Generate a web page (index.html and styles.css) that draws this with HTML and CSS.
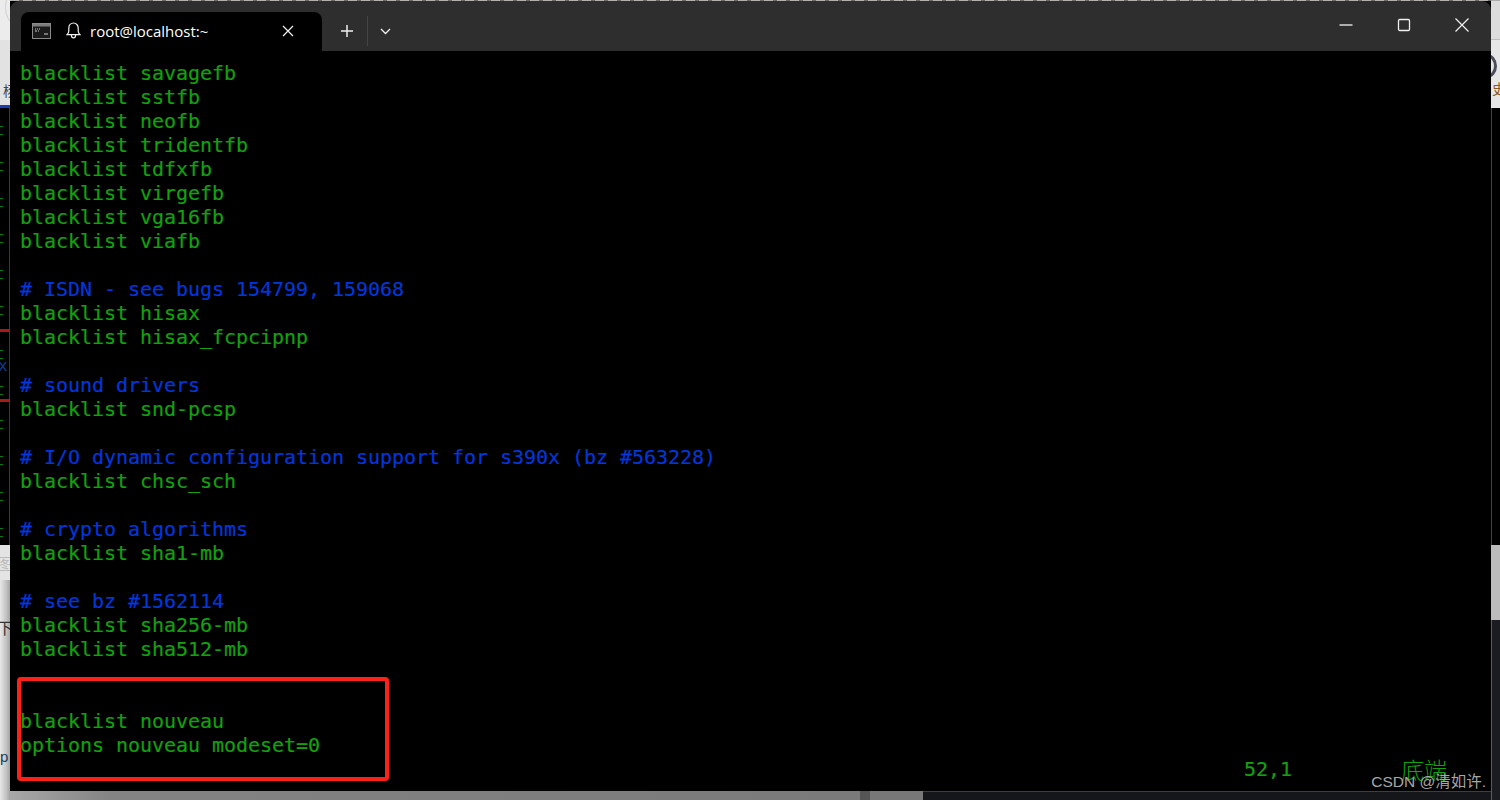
FILE: index.html
```html
<!DOCTYPE html>
<html lang="zh">
<head>
<meta charset="utf-8">
<title>root@localhost:~</title>
<link rel="stylesheet" href="styles.css">
</head>
<body>
<div class="desk">
  <div class="side side-left">
    <div class="bg-top"><span class="arc arc-left"></span></div>
    <div class="bg-bar"><span class="peek">杨</span></div>
    <div class="bg-blue"></div>
    <div class="code-strip code-a"></div>
    <div class="red-tick"></div>
    <div class="code-strip code-b"><span class="peek-x">x</span></div>
    <div class="red-tick"></div>
    <div class="code-strip code-c"></div>
    <div class="bg-panel"><span class="peek-faint">图</span></div>
    <div class="bg-page">
      <span class="peek-down">下</span>
      <span class="peek-p">p</span>
    </div>
  </div>
  <div class="center">
    <div class="top-strip"></div>
    <div class="center-fill"></div>
    <div class="bottom-strip">
      <div class="strip-gray"></div>
      <div class="strip-thumb"></div>
      <div class="strip-gray-short"></div>
      <div class="strip-dark"></div>
    </div>
  </div>
  <div class="side side-right">
    <div class="bg-top-r"></div>
    <div class="bg-bar-r"><span class="arc arc-right"></span><span class="peek-r">史</span></div>
    <div class="dark-r"></div>
    <div class="light-r"></div>
    <div class="dark-r-end"></div>
  </div>

  <section class="window">
    <header class="titlebar">
      <div class="tab">
        <svg class="ic-term" width="19" height="16" viewBox="0 0 19 16">
          <rect x="0.5" y="0.5" width="18" height="15" fill="#1b1b1b" stroke="#8a8a8a"/>
          <rect x="1" y="1" width="17" height="2.5" fill="#7d7d7d"/>
          <path d="M3 6h1M5 6h1M7 6h1M3 8h2M6 8h1M12 11h4" stroke="#d0d0d0" stroke-width="1"/>
        </svg>
        <svg class="ic-bell" width="15" height="17" viewBox="0 0 15 17" fill="none" stroke="#f2f2f2" stroke-width="1.2">
          <path d="M1 12.6c1.2-1 1.8-2 1.8-3.6V6.2C2.8 3.3 4.8 1 7.5 1s4.7 2.300 4.700 5.200V9c0 1.600.6 2.600 1.800 3.600z"/>
          <path d="M5.400 13c0 1.700.9 2.900 2.100 2.900S9.600 14.700 9.600 13"/>
        </svg>
        <span class="tab-title">root@localhost:~</span>
        <svg class="ic-x" width="12" height="12" viewBox="0 0 12 12" stroke="#f2f2f2" stroke-width="1.200"><path d="M1 1l10 10M11 1L1 11"/></svg>
      </div>
      <svg class="ic-plus" width="14" height="14" viewBox="0 0 14 14" stroke="#efefef" stroke-width="1.500"><path d="M7 1v12M1 7h12"/></svg>
      <span class="divider"></span>
      <svg class="ic-chev" width="11" height="7" viewBox="0 0 11 7" fill="none" stroke="#efefef" stroke-width="1.300"><path d="M1 1l4.500 4.500L10 1"/></svg>
      <div class="controls">
        <svg width="14" height="14" viewBox="0 0 14 14" stroke="#d8d8d8" stroke-width="1.400"><path d="M0.500 7h13"/></svg>
        <svg width="14" height="14" viewBox="0 0 14 14" fill="none" stroke="#f0f0f0" stroke-width="1.300"><rect x="1.500" y="1.500" width="11" height="11" rx="1.200"/></svg>
        <svg width="14" height="14" viewBox="0 0 14 14" stroke="#f0f0f0" stroke-width="1.200"><path d="M0.500 0.500l13 13M13.500 0.500l-13 13"/></svg>
      </div>
    </header>
    <div class="terminal">
      <div class="line">blacklist savagefb</div>
      <div class="line">blacklist sstfb</div>
      <div class="line">blacklist neofb</div>
      <div class="line">blacklist tridentfb</div>
      <div class="line">blacklist tdfxfb</div>
      <div class="line">blacklist virgefb</div>
      <div class="line">blacklist vga16fb</div>
      <div class="line">blacklist viafb</div>
      <div class="line"></div>
      <div class="line comment"># ISDN - see bugs 154799, 159068</div>
      <div class="line">blacklist hisax</div>
      <div class="line">blacklist hisax_fcpcipnp</div>
      <div class="line"></div>
      <div class="line comment"># sound drivers</div>
      <div class="line">blacklist snd-pcsp</div>
      <div class="line"></div>
      <div class="line comment"># I/O dynamic configuration support for s390x (bz #563228)</div>
      <div class="line">blacklist chsc_sch</div>
      <div class="line"></div>
      <div class="line comment"># crypto algorithms</div>
      <div class="line">blacklist sha1-mb</div>
      <div class="line"></div>
      <div class="line comment"># see bz #1562114</div>
      <div class="line">blacklist sha256-mb</div>
      <div class="line">blacklist sha512-mb</div>
      <div class="line"></div>
      <div class="line"></div>
      <div class="line">blacklist nouveau</div>
      <div class="line">options nouveau modeset=0</div>
      <div class="line status"><span class="pos">52,1</span><span class="where">底端</span></div>
    </div>
    <div class="highlight"></div>
    <div class="watermark">CSDN @清如许.</div>
  </section>
</div>
</body>
</html>
```
FILE: styles.css
```css
* { box-sizing: border-box; }
html, body { margin: 0; padding: 0; }
body { width: 1500px; height: 800px; overflow: hidden; background: #000; }

.desk {
  position: relative;
  width: 1500px;
  height: 800px;
  display: grid;
  grid-template-columns: 10px 1481px 9px;
  overflow: hidden;
}

/* backdrop */
.side { display: flex; flex-direction: column; height: 800px; overflow: hidden; }
.side-left span, .side-right span { display: block; }

.bg-top { height: 40px; background: #ececec; position: relative; overflow: hidden; }
.arc { position: absolute; border-radius: 50%; }
.arc-left { left: 5px; top: -10px; width: 20px; height: 34px; border: 1px solid #d2d2d2; }
.bg-bar { height: 65px; background: #e2e2e2; position: relative; overflow: hidden; }
.peek { position: absolute; left: 3px; top: 40px; font: 14px/20px "Noto Sans CJK SC", sans-serif; color: #444; }
.bg-blue { height: 3px; background: #1c3fb0; }
.code-strip {
  background:
    repeating-linear-gradient(#000 0, #000 18px, #0d7a10 18px, #0d7a10 19px, #000 19px, #000 26px, #0d7a10 26px, #0d7a10 27px, #000 27px, #000 36px) 0 0 / 3px 100% no-repeat,
    #000;
  border-right: 1px solid #3a3a3a;
  position: relative;
  overflow: hidden;
}
.code-a { height: 221px; }
.code-b { height: 67px; }
.code-c { height: 143px; }
.red-tick { height: 3px; background: #a81a12; }
.peek-x { position: absolute; left: -2px; top: 24px; font: 16px/20px "DejaVu Sans Mono", monospace; color: #123a8c; }
.bg-panel { height: 35px; background: #e4e4e4; position: relative; overflow: hidden; }
.peek-faint { position: absolute; left: -3px; top: 8px; font: 16px/20px "Noto Sans CJK SC", sans-serif; color: #bbb; }
.bg-page {
  flex: 1;
  background: linear-gradient(90deg, #e8e8e8 0, #c4c4c4 60%, #a4a4a4 100%);
  position: relative;
  overflow: hidden;
}
.peek-down { position: absolute; left: -3px; top: 37px; font: 16px/20px "Noto Sans CJK SC", sans-serif; color: #333; }
.peek-p { position: absolute; left: 0; top: 167px; font: 15px/20px "Liberation Sans", sans-serif; color: #163b63; }

.center { display: flex; flex-direction: column; height: 800px; }
.top-strip {
  height: 1px;
  background: repeating-linear-gradient(90deg, #b4b0ac 0, #b4b0ac 9px, #6f6b68 9px, #6f6b68 13px);
}
.center-fill { flex: 1; background: #000; }
.bottom-strip { height: 9px; display: flex; }
.strip-gray { width: 850px; background: linear-gradient(90deg, #a8a8a8 0, #838383 12%, #7a7a7a 100%); }
.strip-thumb { width: 10px; background: #555; }
.strip-gray-short { width: 53px; background: #787878; }
.strip-dark { flex: 1; background: #15161a; border-top: 1px solid #3d3e42; }

.bg-top-r { height: 40px; background: #dcdcdc; border-top: 1px solid #aaa; box-shadow: inset 0 -13px 0 -12px #bdbdbd; }
.bg-bar-r { height: 68px; background: #e6e6e6; position: relative; overflow: hidden; }
.arc-right { left: -14px; top: 14px; width: 20px; height: 24px; border: 3px solid #4c4c5c; }
.peek-r { position: absolute; left: 1px; top: 38px; font: 14px/20px "Noto Sans CJK SC", sans-serif; color: #8a5a20; }
.dark-r { height: 437px; background: #000; border-left: 1px solid #444; }
.light-r { height: 75px; background: #bcbcbc; }
.dark-r-end { flex: 1; background: #1a1c21; border-left: 1px solid #5a5a5a; }

/* terminal window */
.window {
  position: absolute;
  left: 10px;
  top: 1px;
  width: 1481px;
  height: 790px;
  background: #000;
  border-radius: 9px;
  overflow: hidden;
  display: flex;
  flex-direction: column;
}
.titlebar {
  height: 50px;
  background: #2e2e2e;
  display: flex;
  align-items: center;
  flex: none;
}
.tab {
  width: 301px;
  height: 39px;
  margin: 11px 0 0 11px;
  background: #000;
  border-radius: 8px 8px 0 0;
  display: flex;
  align-items: center;
  padding: 0 0 2px 11px;
  flex: none;
}
.ic-term { flex: none; }
.ic-bell { margin-left: 15px; flex: none; }
.tab-title {
  margin-left: 9px;
  width: 192px;
  font: 15px/20px "Open Sans", "Noto Sans", sans-serif;
  color: #fff;
  white-space: nowrap;
}
.ic-x { flex: none; margin-left: 0; }
.ic-plus { margin: 10px 0 0 18px; flex: none; }
.divider { width: 1px; height: 30px; background: #454545; margin: 10px 0 0 13px; flex: none; }
.ic-chev { margin: 11px 0 0 11.5px; flex: none; }
.controls {
  margin-left: auto;
  padding: 0 22px 0 0;
  display: flex;
  gap: 44px;
  align-items: center;
  margin-top: -3px;
}
.terminal {
  flex: 1;
  padding: 10px 10px 0;
  font-family: "DejaVu Sans Mono", "Noto Sans CJK SC", monospace;
  font-size: 20px;
  letter-spacing: -0.04px;
  color: #13a10e;
  -webkit-text-stroke: 0.2px currentColor;
}
.line { height: 24px; line-height: 24px; white-space: pre; }
.comment { color: #0037da; }
.status { display: flex; }
.pos { margin-left: 1224px; width: 157px; flex: none; font-size: 20px; }
.where { font: 300 23px/24px "Noto Sans CJK SC", sans-serif; letter-spacing: 0; -webkit-text-stroke: 0; }
.highlight {
  position: absolute;
  left: 7px;
  top: 676px;
  width: 372px;
  height: 104px;
  border: 4px solid #ff2118;
  border-radius: 4px;
}
.watermark {
  position: absolute;
  right: 5px;
  bottom: 0;
  font: 15.5px/18px "Liberation Sans", "Noto Sans CJK SC", sans-serif;
  color: #a6a6a6;
  white-space: nowrap;
}
```
